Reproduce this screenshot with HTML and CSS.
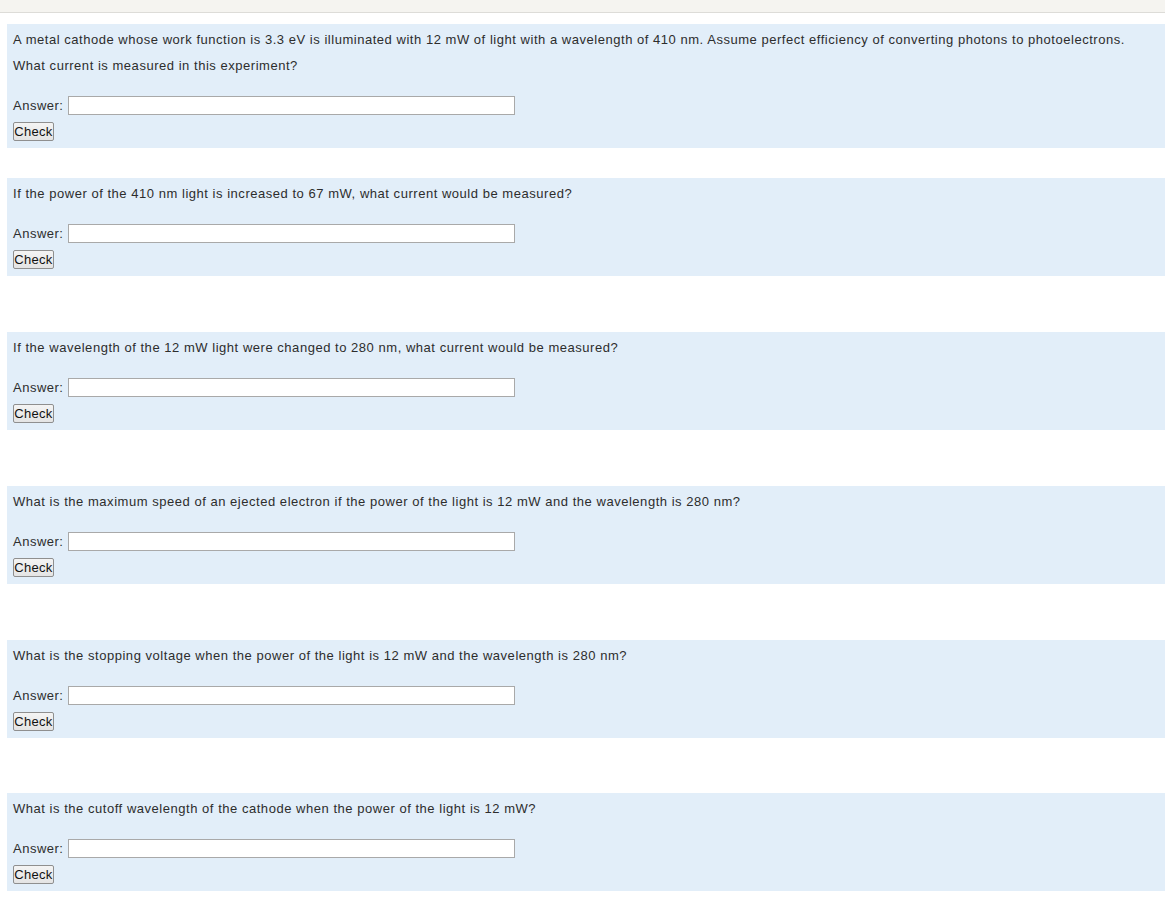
FILE: index.html
```html
<!DOCTYPE html>
<html>
<head>
<meta charset="utf-8">
<link rel="stylesheet" href="styles.css">
</head>
<body>
<div class="topbar"></div>
<div class="content">
  <div class="question first">
    <p class="text">A metal cathode whose work function is 3.3 eV is illuminated with 12 mW of light with a wavelength of 410 nm. Assume perfect efficiency of converting photons to photoelectrons.</p>
    <p class="text">What current is measured in this experiment?</p>
    <div class="answer"><label class="label">Answer:</label><input class="field" type="text"></div>
    <button class="check">Check</button>
  </div>
  <div class="question second">
    <p class="text">If the power of the 410 nm light is increased to 67 mW, what current would be measured?</p>
    <div class="answer"><label class="label">Answer:</label><input class="field" type="text"></div>
    <button class="check">Check</button>
  </div>
  <div class="question">
    <p class="text">If the wavelength of the 12 mW light were changed to 280 nm, what current would be measured?</p>
    <div class="answer"><label class="label">Answer:</label><input class="field" type="text"></div>
    <button class="check">Check</button>
  </div>
  <div class="question">
    <p class="text">What is the maximum speed of an ejected electron if the power of the light is 12 mW and the wavelength is 280 nm?</p>
    <div class="answer"><label class="label">Answer:</label><input class="field" type="text"></div>
    <button class="check">Check</button>
  </div>
  <div class="question">
    <p class="text">What is the stopping voltage when the power of the light is 12 mW and the wavelength is 280 nm?</p>
    <div class="answer"><label class="label">Answer:</label><input class="field" type="text"></div>
    <button class="check">Check</button>
  </div>
  <div class="question last">
    <p class="text">What is the cutoff wavelength of the cathode when the power of the light is 12 mW?</p>
    <div class="answer"><label class="label">Answer:</label><input class="field" type="text"></div>
    <button class="check">Check</button>
  </div>
</div>
</body>
</html>
```

FILE: styles.css
```css
html, body {
  margin: 0;
  padding: 0;
  background: #ffffff;
  font-family: "Liberation Sans", Arial, sans-serif;
  font-size: 13px;
  color: #2d2d2d;
}

.topbar {
  height: 12px;
  background: #f5f4f0;
  border-bottom: 1px solid #dddcd8;
}

.content {
  padding: 11px 0 0 7px;
  display: flex;
  flex-direction: column;
}

.question {
  background: #e2eef9;
  padding: 3px 6px 7px 6px;
  margin-top: 56px;
  display: flex;
  flex-direction: column;
  align-items: flex-start;
}

.question.first {
  margin-top: 0;
}

.question.second {
  margin-top: 30px;
}

.question.last {
  margin-top: 55px;
}

.text {
  margin: 0;
  line-height: 26px;
  letter-spacing: 0.53px;
}

.answer {
  display: flex;
  align-items: center;
  margin-top: 17px;
  height: 19px;
}

.label {
  letter-spacing: 0.5px;
  margin-right: 5px;
}

.field {
  box-sizing: border-box;
  width: 447px;
  height: 19px;
  margin: 0;
  padding: 0 2px;
  border: 1px solid #a9a9a9;
  background: #ffffff;
  font-family: inherit;
  font-size: 13px;
}

.check {
  box-sizing: border-box;
  margin-top: 7px;
  width: 41px;
  height: 19px;
  padding: 0;
  border: 1px solid #8f8f8f;
  border-radius: 2px;
  background: linear-gradient(#f4f4f4, #e4e4e4);
  font-family: inherit;
  font-size: 13px;
  letter-spacing: 0.3px;
  color: #111111;
  line-height: 17px;
}
```
